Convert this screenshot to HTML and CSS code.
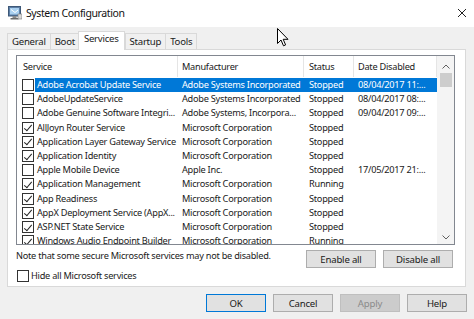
FILE: index.html
```html
<!DOCTYPE html>
<html lang="en">
<head>
    <meta charset="UTF-8">
    <meta name="viewport" content="width=device-width, initial-scale=1.0">
    <title>System Configuration</title>
    <link rel="stylesheet" href="styles.css">
</head>
<body>

    <div class="window">
        <div class="titlebar">
            <svg class="app-icon" viewBox="0 0 14 14" width="14" height="14">
                <rect x="0.5" y="0.5" width="12" height="9.5" fill="#5d7fa6" stroke="#3e5878"/>
                <rect x="2" y="2" width="9" height="6.5" fill="#a9d0f0"/>
                <path d="M3 3.5 L7 6.5 L10 4" stroke="#ffffff" stroke-width="1" fill="none"/>
                <rect x="4.5" y="10" width="4" height="2" fill="#8a8a8a"/>
                <rect x="2.5" y="12" width="8" height="1.5" fill="#6b6b6b"/>
                <rect x="10" y="8" width="4" height="5" fill="#d8d8d8" stroke="#7a7a7a" stroke-width="0.6"/>
            </svg>
            <span class="title">System Configuration</span>
            <svg class="close" viewBox="0 0 10 10" width="10" height="10">
                <path d="M1 1 L9 9 M9 1 L1 9" stroke="#222" stroke-width="1"/>
            </svg>
        </div>

        <div class="tabs">
            <div class="tab">General</div>
            <div class="tab">Boot</div>
            <div class="tab active">Services</div>
            <div class="tab">Startup</div>
            <div class="tab">Tools</div>
        </div>

        <div class="panel">
            <div class="listbox">
                <div class="list-main">
                    <div class="list-head">
                        <div class="hcell c-service">Service</div>
                        <div class="hcell c-maker">Manufacturer</div>
                        <div class="hcell c-status">Status</div>
                        <div class="hcell c-date">Date Disabled</div>
                    </div>
                    <div class="rows">
                        <div class="row selected">
                            <div class="cell c-check"><span class="cb"></span></div>
                            <div class="cell c-name">Adobe Acrobat Update Service</div>
                            <div class="cell c-maker">Adobe Systems Incorporated</div>
                            <div class="cell c-status">Stopped</div>
                            <div class="cell c-date">08/04/2017 11:...</div>
                        </div>
                        <div class="row">
                            <div class="cell c-check"><span class="cb"></span></div>
                            <div class="cell c-name">AdobeUpdateService</div>
                            <div class="cell c-maker">Adobe Systems Incorporated</div>
                            <div class="cell c-status">Stopped</div>
                            <div class="cell c-date">08/04/2017 08:...</div>
                        </div>
                        <div class="row">
                            <div class="cell c-check"><span class="cb"></span></div>
                            <div class="cell c-name">Adobe Genuine Software Integri...</div>
                            <div class="cell c-maker">Adobe Systems, Incorpora...</div>
                            <div class="cell c-status">Stopped</div>
                            <div class="cell c-date">09/04/2017 09:...</div>
                        </div>
                        <div class="row">
                            <div class="cell c-check"><span class="cb on"></span></div>
                            <div class="cell c-name">AllJoyn Router Service</div>
                            <div class="cell c-maker">Microsoft Corporation</div>
                            <div class="cell c-status">Stopped</div>
                            <div class="cell c-date"></div>
                        </div>
                        <div class="row">
                            <div class="cell c-check"><span class="cb on"></span></div>
                            <div class="cell c-name">Application Layer Gateway Service</div>
                            <div class="cell c-maker">Microsoft Corporation</div>
                            <div class="cell c-status">Stopped</div>
                            <div class="cell c-date"></div>
                        </div>
                        <div class="row">
                            <div class="cell c-check"><span class="cb on"></span></div>
                            <div class="cell c-name">Application Identity</div>
                            <div class="cell c-maker">Microsoft Corporation</div>
                            <div class="cell c-status">Stopped</div>
                            <div class="cell c-date"></div>
                        </div>
                        <div class="row">
                            <div class="cell c-check"><span class="cb"></span></div>
                            <div class="cell c-name">Apple Mobile Device</div>
                            <div class="cell c-maker">Apple Inc.</div>
                            <div class="cell c-status">Stopped</div>
                            <div class="cell c-date">17/05/2017 21:...</div>
                        </div>
                        <div class="row">
                            <div class="cell c-check"><span class="cb on"></span></div>
                            <div class="cell c-name">Application Management</div>
                            <div class="cell c-maker">Microsoft Corporation</div>
                            <div class="cell c-status">Running</div>
                            <div class="cell c-date"></div>
                        </div>
                        <div class="row">
                            <div class="cell c-check"><span class="cb on"></span></div>
                            <div class="cell c-name">App Readiness</div>
                            <div class="cell c-maker">Microsoft Corporation</div>
                            <div class="cell c-status">Stopped</div>
                            <div class="cell c-date"></div>
                        </div>
                        <div class="row">
                            <div class="cell c-check"><span class="cb on"></span></div>
                            <div class="cell c-name">AppX Deployment Service (AppX...</div>
                            <div class="cell c-maker">Microsoft Corporation</div>
                            <div class="cell c-status">Stopped</div>
                            <div class="cell c-date"></div>
                        </div>
                        <div class="row">
                            <div class="cell c-check"><span class="cb on"></span></div>
                            <div class="cell c-name">ASP.NET State Service</div>
                            <div class="cell c-maker">Microsoft Corporation</div>
                            <div class="cell c-status">Stopped</div>
                            <div class="cell c-date"></div>
                        </div>
                        <div class="row">
                            <div class="cell c-check"><span class="cb on"></span></div>
                            <div class="cell c-name">Windows Audio Endpoint Builder</div>
                            <div class="cell c-maker">Microsoft Corporation</div>
                            <div class="cell c-status">Running</div>
                            <div class="cell c-date"></div>
                        </div>
                    </div>
                </div>
                <div class="scrollbar">
                    <svg class="arrow" viewBox="0 0 8 5" width="8" height="5"><path d="M0.5 4.5 L4 1 L7.5 4.5" stroke="#606060" fill="none"/></svg>
                    <div class="thumb"></div>
                    <div class="track"></div>
                    <svg class="arrow" viewBox="0 0 8 5" width="8" height="5"><path d="M0.5 0.5 L4 4 L7.5 0.5" stroke="#606060" fill="none"/></svg>
                </div>
            </div>

            <div class="note-row">
                <span class="note">Note that some secure Microsoft services may not be disabled.</span>
                <div class="btn-group">
                    <button class="btn">Enable all</button>
                    <button class="btn">Disable all</button>
                </div>
            </div>

            <label class="hide-row">
                <span class="cb"></span>
                <span>Hide all Microsoft services</span>
            </label>
        </div>

        <div class="footer">
            <button class="btn wide default">OK</button>
            <button class="btn wide">Cancel</button>
            <button class="btn wide" disabled>Apply</button>
            <button class="btn wide">Help</button>
        </div>

        <svg class="cursor" viewBox="0 0 12 19" width="12" height="19">
            <path d="M0.5 0.5 L0.5 15.5 L4 12 L6.5 17.8 L8.6 16.9 L6.2 11.3 L11 11.3 Z" fill="#fff" stroke="#000" stroke-width="1" stroke-linejoin="round"/>
        </svg>
    </div>

</body>
</html>
```

FILE: styles.css
```css
* {
    box-sizing: border-box;
    margin: 0;
    padding: 0;
}

body {
    width: 474px;
    height: 319px;
    overflow: hidden;
    background: #f0f0f0;
    font-family: "Noto Sans", "Liberation Sans", sans-serif;
    font-size: 9.2px;
    letter-spacing: -0.25px;
    color: #1a1a1a;
}

.window {
    position: relative;
    height: 319px;
}

/* Title bar */
.titlebar {
    height: 27px;
    background: #fff;
    display: flex;
    align-items: center;
    padding-left: 8px;
}

.app-icon {
    margin-right: 4px;
    margin-top: -1px;
}

.title {
    font-size: 10.5px;
    letter-spacing: -0.4px;
    color: #111;
    margin-top: -1px;
}

.close {
    margin-left: auto;
    margin-right: 7px;
    margin-top: -1px;
}

/* Tabs */
.tabs {
    display: flex;
    align-items: flex-end;
    padding-left: 7px;
    margin-top: 5px;
    height: 17px;
    position: relative;
    z-index: 1;
}

.tab {
    height: 16px;
    padding: 0 4px;
    border: 1px solid #d9d9d9;
    border-bottom: none;
    margin-right: -1px;
    background: #f0f0f0;
    line-height: 15px;
    font-size: 9.6px;
}

.tab.active {
    background: #fff;
    padding: 0 5px;
    line-height: 13px;
    margin: 0 0 -1px -1px;
    height: 19px;
}

/* Tab page */
.panel {
    margin: 0 8px 0 7px;
    height: 238px;
    background: #fff;
    border: 1px solid #d9d9d9;
    padding: 5px 10px 0 8px;
}

.listbox {
    height: 190px;
    border: 1px solid #828790;
    display: flex;
}

.list-main {
    flex: 1;
    overflow: hidden;
}

.list-head {
    display: flex;
    height: 21px;
    align-items: center;
}

.hcell {
    height: 100%;
    display: flex;
    align-items: center;
    border-right: 1px solid #e5e5e5;
    white-space: nowrap;
}

.hcell.c-service { width: 161px; padding-left: 6px; }
.hcell.c-maker { width: 126px; }
.hcell.c-status { width: 50px; }
.hcell.c-date { width: 83px; }

.rows {
    padding-top: 1px;
}

.row {
    display: flex;
    height: 14.2px;
    line-height: 14px;
    white-space: nowrap;
}

.cell {
    overflow: hidden;
}

.c-check {
    width: 18px;
    display: flex;
    align-items: center;
    padding-left: 5px;
}

.c-name { width: 143px; padding-left: 2px; }
.c-maker { width: 126px; padding-left: 4px; }
.c-status { width: 50px; padding-left: 5px; }
.c-date { width: 83px; padding-left: 4px; }

.row.selected .cell:not(.c-check) {
    background: #0078d7;
    color: #fff;
}

/* Checkboxes */
.cb {
    display: inline-block;
    position: relative;
    width: 12px;
    height: 12px;
    border: 1px solid #333;
    background: #fff;
    flex-shrink: 0;
}

.cb.on::after {
    content: "";
    position: absolute;
    left: 3.3px;
    top: 0.6px;
    width: 3px;
    height: 7px;
    border-right: 1.2px solid #222;
    border-bottom: 1.2px solid #222;
    transform: rotate(40deg);
}

/* Scrollbar */
.scrollbar {
    width: 17px;
    background: #f4f4f4;
    display: flex;
    flex-direction: column;
    align-items: center;
    padding: 8px 0 4px;
}

.arrow {
    flex-shrink: 0;
}

.thumb {
    width: 12px;
    height: 14px;
    margin-top: 4px;
    background: #cdcdcd;
}

.track {
    flex: 1;
}

/* Bottom of the tab page */
.note-row {
    display: flex;
    align-items: center;
    justify-content: space-between;
    margin-top: 5px;
    padding-right: 2px;
}

.note {
    margin-top: -7px;
}

.btn-group {
    display: flex;
    gap: 7px;
}

.btn {
    height: 18px;
    width: 70px;
    background: #e1e1e1;
    border: 1px solid #adadad;
    font-family: inherit;
    font-size: 9.6px;
    letter-spacing: -0.2px;
    color: #1a1a1a;
}

.btn.wide {
    width: 60px;
}

.btn.default {
    border-color: #0078d7;
}

.btn:disabled {
    background: #cccccc;
    border-color: #bfbfbf;
    color: #8a8a8a;
}

.hide-row {
    display: flex;
    align-items: center;
    gap: 2px;
    margin: 1px 0 0 1px;
}

.footer {
    display: flex;
    justify-content: flex-end;
    gap: 7px;
    padding: 7px 7px 0 0;
}

/* Mouse pointer sitting over the dialog */
.cursor {
    position: absolute;
    left: 277px;
    top: 28px;
}
```
